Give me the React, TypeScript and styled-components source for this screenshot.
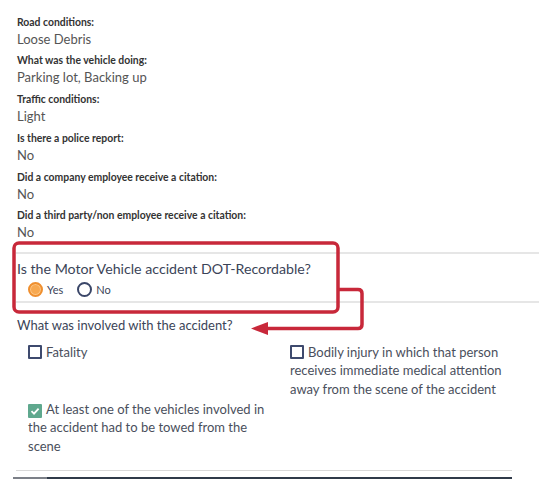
import React from 'react';
import styled, { createGlobalStyle } from 'styled-components';

const GlobalStyle = createGlobalStyle`
  html, body {
    margin: 0;
    padding: 0;
    background: #ffffff;
  }
  body {
    font-family: Lato, "Open Sans", "Liberation Sans", sans-serif;
    color: #4a4a4a;
  }
`;

const details = [
  { label: 'Road conditions:', value: 'Loose Debris' },
  { label: 'What was the vehicle doing:', value: 'Parking lot, Backing up' },
  { label: 'Traffic conditions:', value: 'Light' },
  { label: 'Is there a police report:', value: 'No' },
  { label: 'Did a company employee receive a citation:', value: 'No' },
  { label: 'Did a third party/non employee receive a citation:', value: 'No' },
];

const IncidentDetails: React.FC = () => {
  return (
    <Page>
      <GlobalStyle />

      <DetailList>
        {details.map((item, index) => (
          <Field key={index}>
            <FieldLabel>{item.label}</FieldLabel>
            <FieldValue>{item.value}</FieldValue>
          </Field>
        ))}
      </DetailList>

      <QuestionSection>
        <Question>Is the Motor Vehicle accident DOT-Recordable?</Question>
        <RadioRow>
          <RadioOption>
            <Radio $checked />
            Yes
          </RadioOption>
          <RadioOption>
            <Radio />
            No
          </RadioOption>
        </RadioRow>
      </QuestionSection>

      <InvolvedTitle>What was involved with the accident?</InvolvedTitle>

      <CheckGrid>
        <CheckItem $maxWidth={245}>
          <Checkbox />
          Fatality
        </CheckItem>
        <CheckItem $maxWidth={220}>
          <Checkbox />
          Bodily injury in which that person receives immediate medical
          attention away from the scene of the accident
        </CheckItem>
        <CheckItem $maxWidth={245}>
          <Checkbox $checked>
            <svg width="10" height="10" viewBox="0 0 10 10">
              <path
                d="M1.5 5.2 L4 7.6 L8.6 2.6"
                fill="none"
                stroke="#ffffff"
                strokeWidth="1.8"
              />
            </svg>
          </Checkbox>
          At least one of the vehicles involved in the accident had to be
          towed from the scene
        </CheckItem>
      </CheckGrid>

      <FooterRule />
      <FooterBar>
        <FooterStart />
      </FooterBar>

      {/* red callout drawn over the form */}
      <Callout width="550" height="490" viewBox="0 0 550 490">
        <rect
          x="14"
          y="243"
          width="324"
          height="69"
          rx="5"
          fill="none"
          stroke="#c8283a"
          strokeWidth="3.5"
        />
        <path
          d="M338 289.5 H358 Q362 289.5 362 293.5 V324.5 Q362 328.5 358 328.5 H266"
          fill="none"
          stroke="#c8283a"
          strokeWidth="3.5"
        />
        <polygon points="251,328.5 268,322 268,335" fill="#c8283a" />
      </Callout>
    </Page>
  );
};

const Page = styled.div`
  position: relative;
  width: 550px;
  height: 490px;
  box-sizing: border-box;
  padding: 14.5px 11px 0 16px;
  overflow: hidden;
`;

const DetailList = styled.div`
  display: flex;
  flex-direction: column;
  gap: 5.8px;
  padding-left: 1px;
`;

const Field = styled.div`
  display: flex;
  flex-direction: column;
`;

const FieldLabel = styled.div`
  font-size: 10.4px;
  font-weight: 700;
  line-height: 15px;
  color: #333333;
`;

const FieldValue = styled.div`
  font-size: 13px;
  line-height: 18px;
  color: #555555;
`;

const QuestionSection = styled.div`
  margin-top: 10.5px;
  border-top: 2px solid #e6e6e6;
  border-bottom: 2px solid #e6e6e6;
  padding: 5px 0 3px 1px;
`;

const Question = styled.div`
  font-size: 14.2px;
  line-height: 20px;
  color: #3b4458;
`;

const RadioRow = styled.div`
  display: flex;
  gap: 14px;
  padding-left: 11px;
  margin-top: 3px;
`;

const RadioOption = styled.label`
  display: flex;
  align-items: center;
  gap: 4px;
  font-size: 11px;
  line-height: 16px;
  color: #3b4458;
`;

const Radio = styled.span<{ $checked?: boolean }>`
  display: inline-block;
  box-sizing: border-box;
  width: 15px;
  height: 15px;
  border-radius: 50%;
  border: 2px solid ${(p) => (p.$checked ? '#ef8f2f' : '#3a4668')};
  background: ${(p) => (p.$checked ? '#f7a850' : '#ffffff')};
  box-shadow: ${(p) => (p.$checked ? 'inset 0 0 0 1px #fbc585' : 'none')};
`;

const InvolvedTitle = styled.div`
  margin-top: 13px;
  padding-left: 1px;
  font-size: 13px;
  line-height: 18px;
  color: #3b4458;
`;

const CheckGrid = styled.div`
  display: grid;
  grid-template-columns: 262px 230px;
  row-gap: 1px;
  margin-top: 8.6px;
  padding-left: 12px;
`;

const CheckItem = styled.div<{ $maxWidth: number }>`
  max-width: ${(p) => p.$maxWidth}px;
  font-size: 13px;
  line-height: 18.7px;
  color: #4a4f5c;
`;

const Checkbox = styled.span<{ $checked?: boolean }>`
  display: inline-flex;
  align-items: center;
  justify-content: center;
  box-sizing: border-box;
  width: 14px;
  height: 14px;
  margin-right: 4px;
  vertical-align: -2px;
  border: ${(p) => (p.$checked ? 'none' : '2px solid #3e4a6e')};
  border-radius: 1px;
  background: ${(p) => (p.$checked ? '#5fa88e' : '#ffffff')};
`;

const FooterRule = styled.div`
  margin-top: 14px;
  width: 496px;
  height: 1px;
  background: #d9d9d9;
`;

const FooterBar = styled.div`
  display: flex;
  margin-top: 6px;
  margin-left: -3px;
  width: 499px;
  height: 2px;
  background: #2f3a49;
`;

const FooterStart = styled.div`
  width: 34px;
  background: #7c8088;
`;

const Callout = styled.svg`
  position: absolute;
  left: 0;
  top: 0;
  pointer-events: none;
`;

export default IncidentDetails;
